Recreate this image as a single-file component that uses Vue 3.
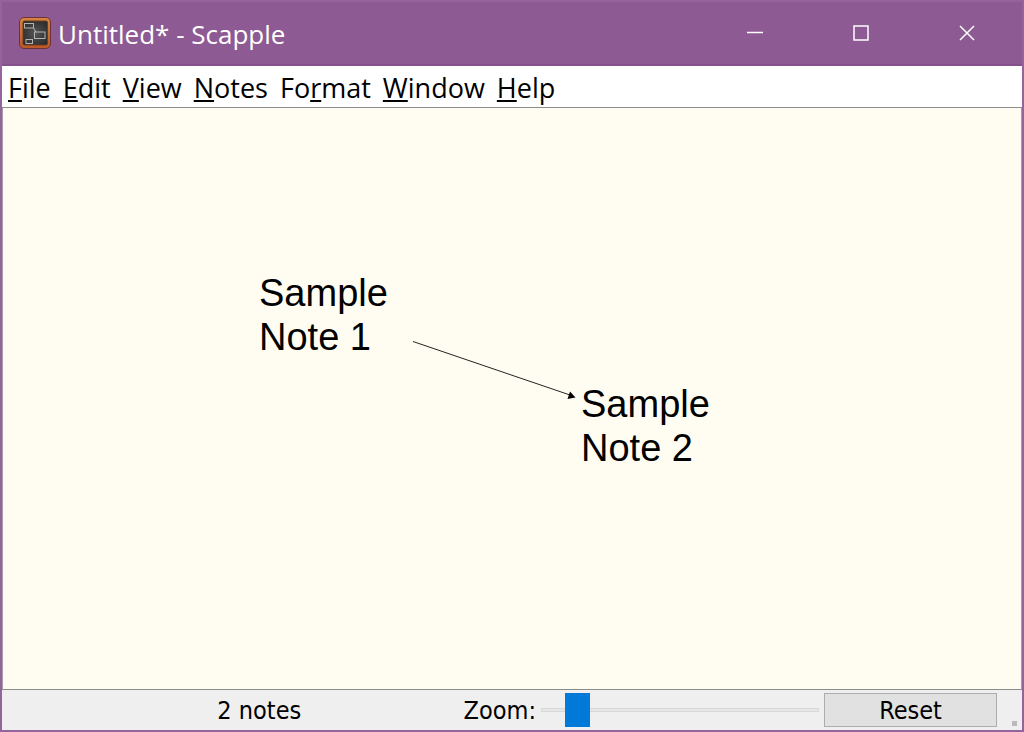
<script setup>
import { ref } from 'vue'

const menus = [
  { before: '', key: 'F', after: 'ile' },
  { before: '', key: 'E', after: 'dit' },
  { before: '', key: 'V', after: 'iew' },
  { before: '', key: 'N', after: 'otes' },
  { before: 'Fo', key: 'r', after: 'mat' },
  { before: '', key: 'W', after: 'indow' },
  { before: '', key: 'H', after: 'elp' },
]

const notes = [
  { id: 1, lines: ['Sample', 'Note 1'], x: 256, y: 163 },
  { id: 2, lines: ['Sample', 'Note 2'], x: 578, y: 274 },
]

const defaultZoom = 18
const zoom = ref(defaultZoom)
</script>

<template>
  <div class="window">
    <header class="titlebar">
      <svg class="app-icon" viewBox="0 0 32 32" aria-hidden="true">
        <defs>
          <linearGradient id="frame" x1="0" y1="0" x2="0" y2="1">
            <stop offset="0" stop-color="#d98442" />
            <stop offset="1" stop-color="#bd5824" />
          </linearGradient>
          <radialGradient id="board" cx="0.5" cy="0.5" r="0.65">
            <stop offset="0" stop-color="#565656" />
            <stop offset="1" stop-color="#292929" />
          </radialGradient>
        </defs>
        <rect x="0.5" y="0.5" width="31" height="31" rx="4.5" fill="url(#frame)" stroke="#68343a" />
        <rect x="4" y="4" width="24.5" height="24" rx="1.5" fill="url(#board)" stroke="#6b3c22" />
        <g fill="none" stroke="#b3b3b3">
          <rect x="5.5" y="6.5" width="9" height="4.5" />
          <rect x="15.5" y="15" width="10.5" height="6.5" />
          <rect x="7" y="22.5" width="6.5" height="4" />
          <path d="M14.5 11L17 15" />
        </g>
      </svg>
      <h1 class="title">Untitled* - Scapple</h1>
      <div class="controls">
        <button type="button" aria-label="Minimize">
          <svg viewBox="0 0 16 16"><path d="M0 7.5H16" /></svg>
        </button>
        <button type="button" aria-label="Maximize">
          <svg viewBox="0 0 16 16"><rect x="1" y="1" width="14" height="14" /></svg>
        </button>
        <button type="button" aria-label="Close">
          <svg viewBox="0 0 16 16"><path d="M1 1L15 15M15 1L1 15" /></svg>
        </button>
      </div>
    </header>

    <nav class="menubar">
      <button v-for="m in menus" :key="m.key" type="button">{{ m.before }}<u>{{ m.key }}</u>{{ m.after }}</button>
    </nav>

    <main class="canvas">
      <svg class="links" aria-hidden="true">
        <path d="M410 233.5L567 287" stroke="#222" />
        <path d="M572.5 289.5L564.5 291L567 283.500Z" fill="#000" />
      </svg>
      <div v-for="n in notes" :key="n.id" class="note" :style="{ left: n.x + 'px', top: n.y + 'px' }">
        <div v-for="line in n.lines" :key="line">{{ line }}</div>
      </div>
    </main>

    <footer class="status">
      <div class="count">2 notes</div>
      <div class="zoom">
        <label for="zoom">Zoom:</label>
        <input id="zoom" v-model="zoom" type="range" min="0" max="200" />
      </div>
      <button type="button" class="reset" @click="zoom = defaultZoom">Reset</button>
      <span class="grip"></span>
    </footer>
  </div>
</template>

<style>
body {
  margin: 0;
}
</style>

<style scoped>
.window {
  display: flex;
  flex-direction: column;
  box-sizing: border-box;
  min-height: 100vh;
  border: 2px solid #96649c;
  background: #fff;
  color: #000;
  font-family: "Open Sans", "Noto Sans", sans-serif;
}

button {
  margin: 0;
  padding: 0;
  border: 0;
  background: none;
  color: inherit;
  font: inherit;
}

.titlebar {
  display: flex;
  align-items: center;
  height: 62px;
  border-bottom: 2px solid #85508c;
  background: #8e5a93;
  color: #fff;
}

.app-icon {
  width: 32px;
  height: 32px;
  margin-left: 17px;
}

.title {
  flex: 1;
  margin: 2px 0 0 7px;
  font-size: 26px;
  font-weight: 400;
  line-height: 36px;
}

.controls {
  display: flex;
  padding-right: 2px;
}

.controls button {
  display: flex;
  align-items: center;
  justify-content: center;
  width: 106px;
  height: 62px;
}

.controls svg {
  width: 16px;
  height: 16px;
  fill: none;
  stroke: #fff;
  stroke-width: 1.5;
}

.menubar {
  display: flex;
  gap: 12px;
  height: 41px;
  padding-left: 6px;
  border-bottom: 1px solid #8c8c8c;
  background: #fff;
  font-size: 27px;
  line-height: 44px;
}

.menubar button {
  line-height: inherit;
}

.menubar u {
  text-decoration-thickness: 2px;
  text-underline-offset: 2px;
}

.canvas {
  position: relative;
  flex: 1;
  border: solid #a3a0a3;
  border-width: 0 1px;
  background: #fffdf2;
}

.links {
  position: absolute;
  width: 100%;
  height: 100%;
}

.note {
  position: absolute;
  font-family: "Liberation Sans", Arial, sans-serif;
  font-size: 38px;
  line-height: 44px;
}

.status {
  position: relative;
  display: flex;
  align-items: center;
  height: 40px;
  border-top: 1px solid #8c8c8c;
  background: #efefef;
  font-family: "DejaVu Sans Condensed", "Noto Sans", sans-serif;
  font-size: 25px;
}

.count {
  flex: 1;
  padding-left: 53px;
  text-align: center;
}

.zoom {
  display: flex;
  align-items: center;
}

.zoom label {
  margin-right: 5px;
}

.zoom input {
  width: 278px;
  height: 36px;
  margin: 0;
  appearance: none;
  background: none;
}

.zoom input::-webkit-slider-runnable-track {
  height: 4px;
  box-sizing: border-box;
  border: 1px solid #d8d8d8;
  background: #e6e6e6;
}

.zoom input::-webkit-slider-thumb {
  width: 25px;
  height: 34px;
  margin-top: -16px;
  border: 0;
  border-radius: 0;
  appearance: none;
  background: #0079d8;
}

.reset {
  box-sizing: border-box;
  width: 173px;
  height: 34px;
  margin: 0 25px 0 5px;
  padding-top: 2px;
  border: 1px solid #adadad;
  background: #e1e1e1;
  line-height: 30px;
}

.grip {
  position: absolute;
  right: 5px;
  bottom: 4px;
  width: 5px;
  height: 5px;
  background: #bababa;
}
</style>
